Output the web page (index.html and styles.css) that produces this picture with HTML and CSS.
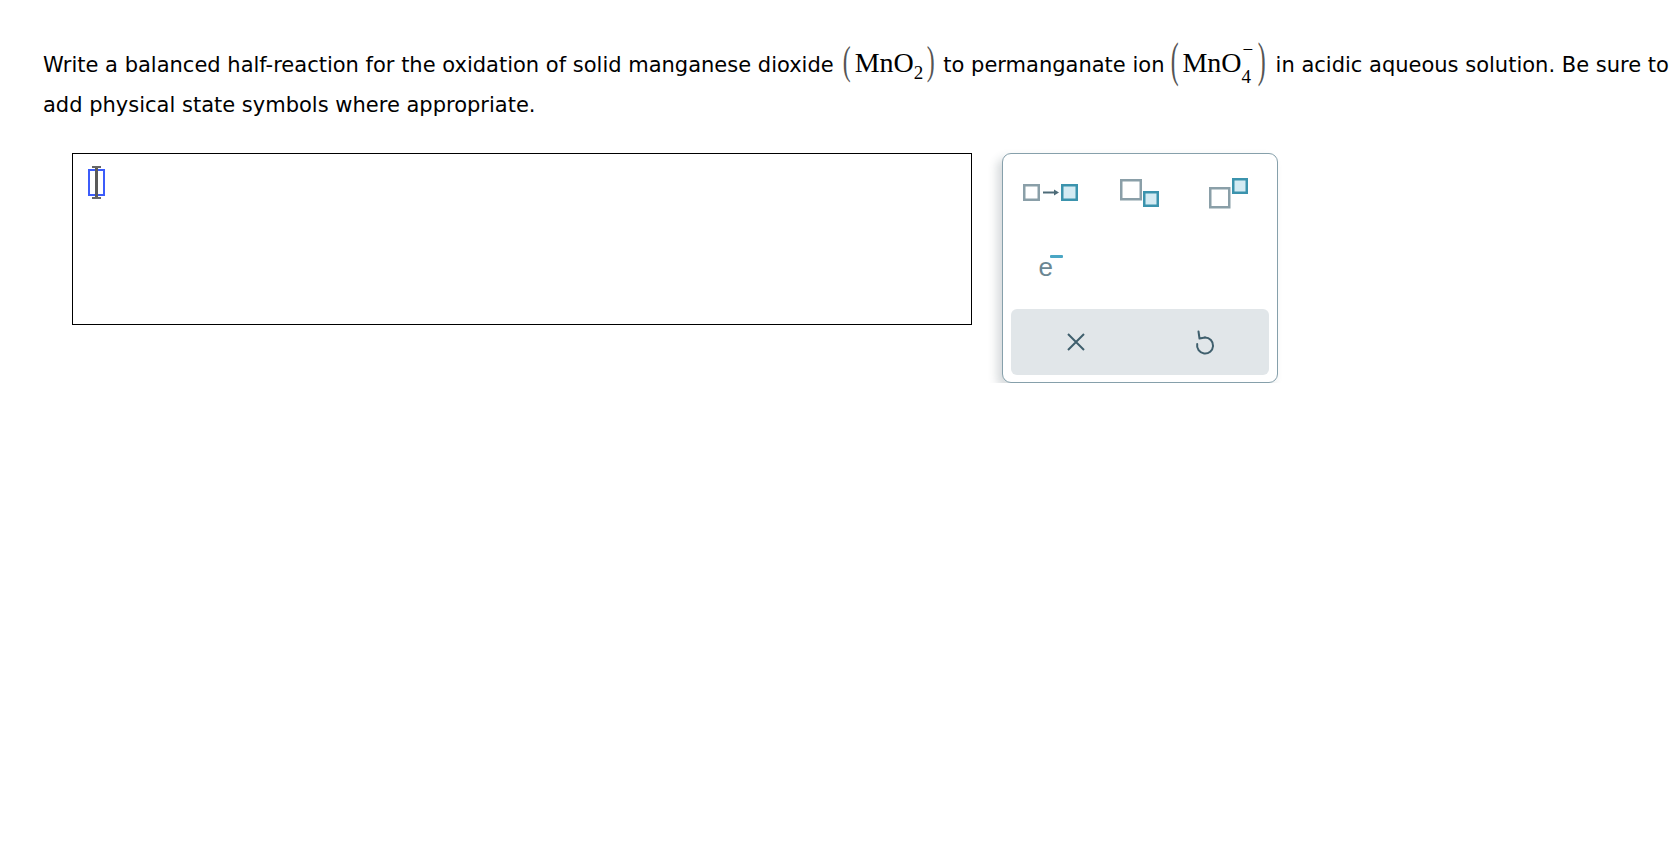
FILE: index.html
```html
<!DOCTYPE html>
<html lang="en">
<head>
<meta charset="utf-8">
<title>Half-reaction</title>
<link rel="stylesheet" href="styles.css">
</head>
<body>
<div class="page">
  <p class="question">
    <span class="line">Write a balanced half-reaction for the oxidation of solid manganese dioxide <span class="math m1"><span class="paren p1">(</span><span class="mi">MnO</span><span class="sub1">2</span><span class="paren p1">)</span></span> to permanganate ion <span class="math m2"><span class="paren p2">(</span><span class="mi">MnO</span><span class="supsub"><span class="sup">−</span><span class="sub">4</span></span><span class="paren p2">)</span></span> in acidic aqueous solution. Be sure to</span>
    <span class="line">add physical state symbols where appropriate.</span>
  </p>

  <div class="answer-row">
    <div class="answer-box">
      <span class="cursor"><span class="beam"></span></span>
    </div>

    <div class="palette">
      <div class="tools">
        <button class="tool" type="button" aria-label="reaction arrow">
          <svg width="56" height="18" viewBox="0 0 56 18">
            <rect x="1.25" y="1.25" width="14.5" height="14.5" fill="#fff" stroke="#8a9fa8" stroke-width="2.5"/>
            <line x1="20" y1="8.5" x2="33" y2="8.5" stroke="#4d6b78" stroke-width="2"/>
            <path d="M31 5.5 L36 8.5 L31 11.5 Z" fill="#4d6b78"/>
            <rect x="39.25" y="1.25" width="14.5" height="14.5" fill="#d4ebf3" stroke="#3b93ad" stroke-width="2.5"/>
          </svg>
        </button>
        <button class="tool" type="button" aria-label="subscript">
          <svg width="40" height="29" viewBox="0 0 40 29">
            <rect x="1.25" y="1.25" width="19.5" height="19" fill="#fff" stroke="#8a9fa8" stroke-width="2.5"/>
            <rect x="24.25" y="13.25" width="13.5" height="13.5" fill="#d4ebf3" stroke="#3b93ad" stroke-width="2.5"/>
          </svg>
        </button>
        <button class="tool" type="button" aria-label="superscript">
          <svg width="40" height="31" viewBox="0 0 40 31">
            <rect x="1.25" y="10.25" width="19" height="19" fill="#fff" stroke="#8a9fa8" stroke-width="2.5"/>
            <rect x="24.25" y="1.25" width="13.5" height="13.5" fill="#d4ebf3" stroke="#3b93ad" stroke-width="2.5"/>
          </svg>
        </button>
        <button class="tool" type="button" aria-label="electron">
          <span class="electron"><span class="e">e</span><span class="minus"></span></span>
        </button>
      </div>
      <div class="actions">
        <button class="action" type="button" aria-label="clear">
          <svg width="20" height="20" viewBox="0 0 20 20">
            <path d="M2 2 L18 18 M18 2 L2 18" stroke="#3f5f6d" stroke-width="2" fill="none"/>
          </svg>
        </button>
        <button class="action" type="button" aria-label="undo">
          <svg width="21" height="26" viewBox="0 0 21 26">
            <path d="M4.5 2.5 L5.5 9.5 L11 8.5" stroke="#3f5f6d" stroke-width="2" fill="none" stroke-linecap="round" stroke-linejoin="round"/>
            <path d="M11 8.5 A8 8 0 1 1 3.2 15" stroke="#3f5f6d" stroke-width="2" fill="none" stroke-linecap="round"/>
          </svg>
        </button>
      </div>
    </div>
  </div>
</div>
</body>
</html>
```
FILE: styles.css
```css
html, body {
  margin: 0;
  padding: 0;
  background: #ffffff;
}

.page {
  padding: 45px 0 0 43px;
  font-family: "DejaVu Sans", Verdana, sans-serif;
  color: #000;
}

.question {
  margin: 0;
  font-size: 21px;
  white-space: nowrap;
}

.line {
  display: block;
  height: 40px;
  line-height: 40px;
}

.math {
  font-family: "Liberation Serif", "Times New Roman", serif;
  line-height: 0;
}

.m1 { margin-left: 2px; margin-right: 1px; }
.m2 { margin-left: -1px; margin-right: 3px; }

.mi {
  font-size: 28px;
  margin-left: 3px;
}

.paren {
  display: inline-block;
  font-family: "Liberation Serif", serif;
  color: #555;
  font-size: 28px;
  line-height: 28px;
  vertical-align: baseline;
}

.p1 {
  transform: scale(0.85, 1.4);
  transform-origin: 50% 62%;
}

.p2 {
  transform: scale(0.85, 1.7);
  transform-origin: 50% 60%;
}

.sub1 {
  font-size: 19px;
  position: relative;
  top: 7px;
  margin-right: 3px;
}

.supsub {
  display: inline-block;
  position: relative;
  font-size: 19px;
  width: 10px;
  height: 10px;
  margin-right: 5px;
}

.supsub .sub {
  position: absolute;
  left: 0;
  top: 5px;
  line-height: 19px;
}

.supsub .sup {
  position: absolute;
  left: 1px;
  top: -22px;
  line-height: 19px;
}

.answer-row {
  display: flex;
  align-items: flex-start;
  gap: 30px;
  margin: 28px 0 0 29px;
}

.answer-box {
  box-sizing: border-box;
  width: 900px;
  height: 172px;
  border: 1px solid #000;
  padding: 15px 0 0 15px;
}

.cursor {
  display: block;
  position: relative;
  box-sizing: border-box;
  width: 17px;
  height: 27px;
  border: 2px solid #3c5cfa;
}

.beam {
  position: absolute;
  left: 5px;
  top: -5px;
  width: 3px;
  height: 33px;
  background: #5a5a5a;
}

.beam::before,
.beam::after {
  content: "";
  position: absolute;
  left: -3px;
  width: 9px;
  height: 2px;
  background: #666;
}

.beam::before { top: 0; }
.beam::after { bottom: 0; }

.palette {
  box-sizing: border-box;
  width: 276px;
  height: 230px;
  border: 1px solid #86a0ab;
  border-radius: 9px;
  padding: 4px;
  background: #fff;
  box-shadow: -5px 5px 10px rgba(50, 70, 80, 0.2);
  display: flex;
  flex-direction: column;
}

.tools {
  display: grid;
  grid-template-columns: repeat(3, 1fr);
  grid-template-rows: 70px 70px;
  row-gap: 4px;
}

.tool {
  border: 0;
  background: transparent;
  padding: 0;
  display: flex;
  align-items: center;
  justify-content: center;
}

.tool svg { display: block; }

.electron {
  position: relative;
  display: inline-block;
  font-family: "Liberation Sans", Arial, sans-serif;
  font-size: 26px;
  line-height: 26px;
  color: #6b8793;
  padding-right: 9px;
  margin-right: 2px;
}

.minus {
  position: absolute;
  right: -1px;
  top: 1px;
  width: 13px;
  height: 3px;
  border-radius: 1px;
  background: #4aa6c4;
}

.actions {
  margin: 7px 4px 3px;
  height: 66px;
  background: #e1e6e9;
  border-radius: 6px;
  display: grid;
  grid-template-columns: 1fr 1fr;
}

.action {
  border: 0;
  background: transparent;
  padding: 0;
  display: flex;
  align-items: center;
  justify-content: center;
}

.action svg { display: block; }
```
